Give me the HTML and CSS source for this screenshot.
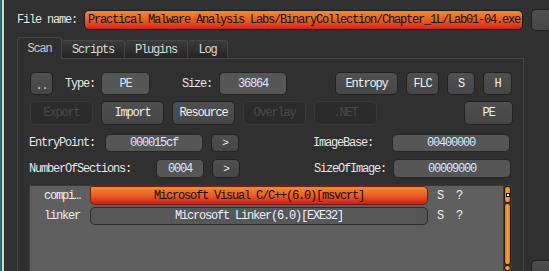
FILE: index.html
```html
<!DOCTYPE html>
<html>
<head>
<meta charset="utf-8">
<link rel="stylesheet" href="styles.css">
</head>
<body>
<div class="app">
  <div class="edge"></div>
  <div class="main">
    <div class="header">
      <span class="lbl fname">File name:</span>
      <div class="path">Practical Malware Analysis Labs/BinaryCollection/Chapter_1L/Lab01-04.exe</div>
      <div class="btn side-top"></div>
    </div>
    <div class="body">
      <div class="left">
        <div class="tabs">
          <div class="tab active w-scan">Scan</div>
          <div class="tab w-scripts">Scripts</div>
          <div class="tab w-plugins">Plugins</div>
          <div class="tab w-log">Log</div>
          <div class="tab-fill"></div>
        </div>
        <div class="panel">
          <div class="row r1">
            <div class="btn dots">..</div>
            <span class="lbl l-type">Type:</span>
            <div class="val w-pe">PE</div>
            <span class="lbl l-size">Size:</span>
            <div class="val w-size">36864</div>
            <div class="btn w-entropy">Entropy</div>
            <div class="btn w-flc">FLC</div>
            <div class="btn w-s">S</div>
            <div class="btn w-h">H</div>
          </div>
          <div class="row r2">
            <div class="btn dis w-63">Export</div>
            <div class="btn w-63">Import</div>
            <div class="btn w-63">Resource</div>
            <div class="btn dis w-63">Overlay</div>
            <div class="btn dis w-63">.NET</div>
            <div class="btn w-pe2">PE</div>
          </div>
          <div class="row r3">
            <span class="lbl l-ep">EntryPoint:</span>
            <div class="val w-ep">000015cf</div>
            <div class="btn arrow">&gt;</div>
            <span class="lbl l-ib">ImageBase:</span>
            <div class="val w-ib">00400000</div>
          </div>
          <div class="row r4">
            <span class="lbl l-ns">NumberOfSections:</span>
            <div class="val w-ns">0004</div>
            <div class="btn arrow">&gt;</div>
            <span class="lbl l-ib">SizeOfImage:</span>
            <div class="val w-ib">00009000</div>
          </div>
          <div class="list">
            <div class="entries">
              <div class="entry e1">
                <span class="etype">compi…</span>
                <div class="bar hot">Microsoft Visual C/C++(6.0)[msvcrt]</div>
                <span class="flag">S</span>
                <span class="flag q">?</span>
              </div>
              <div class="entry e2">
                <span class="etype">linker</span>
                <div class="bar">Microsoft Linker(6.0)[EXE32]</div>
                <span class="flag">S</span>
                <span class="flag q">?</span>
              </div>
            </div>
            <div class="scroll">
              <div class="sb-top"><span class="sb-dot"></span></div>
              <div class="sb-mid"></div>
              <div class="sb-bot"></div>
            </div>
          </div>
        </div>
      </div>
      <div class="right">
        <div class="btn side-bot"></div>
      </div>
    </div>
  </div>
</div>
</body>
</html>
```

FILE: styles.css
```css
* { box-sizing: border-box; }
html, body {
  margin: 0;
  padding: 0;
  width: 549px;
  height: 271px;
  overflow: hidden;
  background: #303030;
}
body {
  font-family: "Liberation Mono", "Courier New", monospace;
  font-size: 12px;
  letter-spacing: -1.2px;
  color: #e4e4e4;
}
.app {
  display: flex;
  height: 271px;
}
.edge {
  width: 5px;
  flex: none;
  background: linear-gradient(to right, #157575 0, #157575 2px, #d6d6c8 2px, #d6d6c8 4px, #2a2a2a 4px);
}
.main {
  flex: 1;
  padding-left: 12px;
  padding-top: 9px;
}
.header {
  display: flex;
  align-items: center;
  height: 21px;
}
.lbl {
  white-space: nowrap;
  color: #e6e6e6;
}
.fname { width: 67px; flex: none; }
.path {
  width: 439px;
  height: 20px;
  flex: none;
  border: 1px solid #1c1c1c;
  border-radius: 5px;
  background: linear-gradient(#f68b2c, #e65a1e 55%, #d4221a);
  color: #111;
  line-height: 18px;
  padding-left: 3px;
  white-space: nowrap;
  overflow: hidden;
}
.btn {
  display: flex;
  align-items: center;
  justify-content: center;
  height: 23px;
  flex: none;
  border: 1px solid #222;
  border-radius: 5px;
  background: linear-gradient(#4f4f4f, #464646);
  color: #f0f0f0;
  white-space: nowrap;
}
.side-top {
  width: 30px;
  height: 22px;
  margin-left: 8px;
}
.body {
  display: flex;
  margin-top: 7px;
}
.left {
  width: 507px;
  flex: none;
}
.right {
  flex: 1;
  padding-left: 7px;
  padding-top: 223px;
}
.side-bot {
  width: 30px;
  height: 11px;
  border-bottom: none;
  border-radius: 5px 5px 0 0;
}
.tabs {
  display: flex;
  align-items: flex-end;
  height: 22px;
}
.tab {
  height: 19px;
  border: 1px solid #474747;
  border-left: none;
  border-radius: 3px 3px 0 0;
  background: linear-gradient(#3b3b3b, #242424);
  display: flex;
  align-items: center;
  justify-content: center;
  color: #dcdcdc;
}
.tab.active {
  height: 22px;
  border-left: 1px solid #474747;
  border-bottom: none;
  background: #303030;
  color: #c8c8c8;
}
.w-scan { width: 45px; }
.w-scripts { width: 63px; }
.w-plugins { width: 63px; }
.w-log { width: 40px; }
.tab-fill {
  flex: 1;
  border-bottom: 1px solid #474747;
}
.panel {
  border: 1px solid #474747;
  border-top: none;
  border-bottom: none;
  height: 212px;
  padding: 13px 10px 0 12px;
}
.row {
  display: flex;
  align-items: center;
}
.r1 { height: 23px; }
.r2 { height: 24px; margin-top: 6px; gap: 8px; }
.r3 { height: 18px; margin-top: 9px; }
.r4 { height: 19px; margin-top: 7px; }
.val {
  display: flex;
  align-items: center;
  justify-content: center;
  flex: none;
  height: 100%;
  border: 1px solid #262626;
  border-radius: 5px;
  background: #565656;
  color: #dde6ff;
}
.dots { width: 23px; padding-top: 5px; color: #cfcfcf; }
.l-type { margin-left: 12px; width: 36px; }
.w-pe { width: 49px; }
.l-size { margin-left: 32px; width: 37px; }
.w-size { width: 68px; }
.w-entropy { width: 63px; margin-left: 48px; }
.w-flc { width: 33px; margin-left: 8px; }
.w-s { width: 28px; margin-left: 8px; }
.w-h { width: 29px; margin-left: 8px; }
.r1 .btn, .r1 .val { height: 23px; }
.w-63 { width: 63px; height: 24px; }
.w-pe2 { width: 49px; height: 24px; margin-left: auto; }
.btn.dis {
  background: #2b2b2b;
  border-color: #393939;
  color: #4a4a4a;
}
.l-ep { width: 76px; margin-left: -1px; }
.w-ep { width: 98px; }
.arrow { width: 28px; height: 100%; margin-left: 8px; font-size: 11px; }
.l-ib { width: 79px; margin-left: 74px; }
.w-ib { width: 118px; }
.l-ns { width: 127px; margin-left: -1px; }
.w-ns { width: 48px; }
.list {
  display: flex;
  margin-top: 7px;
  margin-left: -1px;
  width: 483px;
  height: 86px;
  border: 1px solid #3a3a3a;
  border-bottom: none;
  background: #5f5f5f;
}
.entries {
  flex: 1;
  display: flex;
  flex-direction: column;
  gap: 2px;
}
.entry {
  display: flex;
  align-items: center;
}
.e1 { height: 19px; }
.e2 { height: 18px; }
.etype {
  width: 60px;
  text-align: right;
  padding-right: 10px;
  color: #f0f0f0;
}
.bar {
  width: 338px;
  height: 100%;
  display: flex;
  align-items: center;
  justify-content: center;
  border: 1px solid #2c2c2c;
  border-radius: 5px;
  background: #575757;
  color: #eef2ff;
}
.bar.hot {
  border-color: #7a1a10;
  border-radius: 2px 5px 5px 5px;
  background: linear-gradient(#f58c30, #e85a22 55%, #d01c1a);
  color: #1a0a05;
}
.flag {
  margin-left: 9px;
  color: #f0f0f0;
}
.flag.q { margin-left: 13px; }
.scroll {
  width: 8px;
  display: flex;
  flex-direction: column;
  background: #3a3a3a;
  border-left: 1px solid #3a3a3a;
}
.sb-top, .sb-mid, .sb-bot {
  background: linear-gradient(to right, #e08018, #f4a030 50%, #e08018);
  border: 1px solid #2a1a08;
  border-radius: 3px;
}
.sb-top {
  height: 17px;
  display: flex;
  align-items: center;
  justify-content: center;
}
.sb-dot {
  width: 4px;
  height: 4px;
  background: #fff;
  border: 1px solid #000;
}
.sb-mid { height: 62px; }
.sb-bot { flex: 1; }
```
